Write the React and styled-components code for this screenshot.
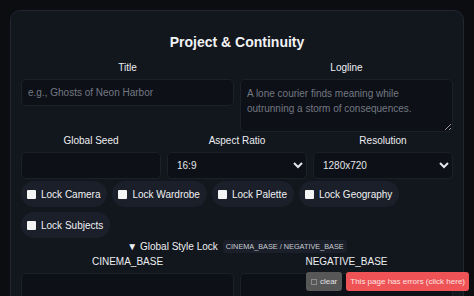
import React from "react";
import styled, { createGlobalStyle } from "styled-components";

const GlobalStyle = createGlobalStyle`
  html, body {
    margin: 0;
    background: #0b0d11;
    color-scheme: dark;
  }
  body {
    padding: 10px;
    font-family: "Liberation Sans", Arial, sans-serif;
    color: #e6e8eb;
  }
`;

const Card = styled.section`
  background: #12161d;
  border: 1px solid #212631;
  border-radius: 10px;
  padding: 10px;
`;

const Heading = styled.h2`
  margin: 12px 0 10px;
  font-size: 14px;
  line-height: 18px;
  font-weight: 700;
  text-align: center;
  color: #f1f3f5;
`;

const Grid = styled.div`
  display: grid;
  grid-template-columns: repeat(${(p) => p.cols}, 1fr);
  column-gap: 6px;
  margin-top: ${(p) => p.top || 2}px;
  align-items: start;
`;

const Field = styled.label`
  display: flex;
  flex-direction: column;
  gap: 5px;
  min-width: 0;
`;

const Label = styled.span`
  font-size: 10px;
  line-height: 13px;
  text-align: center;
  color: #eceef1;
`;

const controlBase = `
  box-sizing: border-box;
  width: 100%;
  background: #0d1016;
  border: 1px solid #1b2029;
  border-radius: 5px;
  color: #d8dbe0;
  font-family: "Liberation Sans", Arial, sans-serif;
  font-size: 10px;
  outline: none;
`;

const Input = styled.input`
  ${controlBase}
  height: 27px;
  padding: 0 6px;
  &::placeholder {
    color: #737984;
  }
`;

const Area = styled.textarea`
  ${controlBase}
  height: 53px;
  padding: 6px 6px;
  line-height: 15px;
  resize: vertical;
  &::placeholder {
    color: #737984;
  }
`;

const Select = styled.select`
  ${controlBase}
  height: 27px;
  padding: 0 5px;
  color: #e4e6ea;
`;

const Chips = styled.div`
  display: flex;
  flex-wrap: wrap;
  gap: 5px;
  margin-top: 2px;
`;

const Chip = styled.label`
  display: inline-flex;
  align-items: center;
  gap: 5px;
  height: 26px;
  padding: 0 7px 0 6px;
  border-radius: 13px;
  background: #1a1f29;
  font-size: 10px;
  color: #f0f1f3;
`;

const Box = styled.input.attrs({ type: "checkbox" })`
  appearance: none;
  margin: 0;
  width: 9px;
  height: 9px;
  border-radius: 1px;
  background: #f4f4f5;
`;

const Details = styled.details`
  margin-top: 2px;
`;

const Summary = styled.summary`
  list-style: none;
  display: flex;
  justify-content: center;
  align-items: center;
  gap: 5px;
  height: 13px;
  font-size: 10px;
  color: #eef0f2;
  &::-webkit-details-marker {
    display: none;
  }
`;

const Badge = styled.span`
  background: #1a1f29;
  border-radius: 3px;
  padding: 2px 3px;
  font-size: 7.3px;
  color: #c9ccd2;
`;

const Overlay = styled.div`
  position: fixed;
  right: 5px;
  bottom: 5px;
  display: flex;
  gap: 4px;
`;

const OverlayButton = styled.button`
  height: 19px;
  border: none;
  border-radius: 3px;
  padding: 0 ${(p) => (p.danger ? 4 : 5)}px;
  font-family: "Liberation Sans", Arial, sans-serif;
  font-size: 8px;
  display: flex;
  align-items: center;
  gap: 3px;
  background: ${(p) => (p.danger ? "#ef5355" : "#575757")};
  color: ${(p) => (p.danger ? "#ffe3e3" : "#e2e2e2")};
`;

const Square = styled.span`
  width: 4px;
  height: 4px;
  border: 1px solid #8a8a8a;
`;

const locks = [
  "Lock Camera",
  "Lock Wardrobe",
  "Lock Palette",
  "Lock Geography",
  "Lock Subjects",
];

export default function App() {
  return (
    <>
      <GlobalStyle />
      <Card>
        <Heading>Project &amp; Continuity</Heading>
        <Grid cols={2} top={10}>
          <Field>
            <Label>Title</Label>
            <Input placeholder="e.g., Ghosts of Neon Harbor" />
          </Field>
          <Field>
            <Label>Logline</Label>
            <Area placeholder="A lone courier finds meaning while outrunning a storm of consequences." />
          </Field>
        </Grid>
        <Grid cols={3}>
          <Field>
            <Label>Global Seed</Label>
            <Input />
          </Field>
          <Field>
            <Label>Aspect Ratio</Label>
            <Select defaultValue="16:9">
              <option>16:9</option>
              <option>4:3</option>
              <option>2.39:1</option>
            </Select>
          </Field>
          <Field>
            <Label>Resolution</Label>
            <Select defaultValue="1280x720">
              <option>1280x720</option>
              <option>1920x1080</option>
            </Select>
          </Field>
        </Grid>
        <Chips>
          {locks.map((l) => (
            <Chip key={l}>
              <Box />
              {l}
            </Chip>
          ))}
        </Chips>
        <Details open>
          <Summary>
            <span>▼ Global Style Lock</span>
            <Badge>CINEMA_BASE / NEGATIVE_BASE</Badge>
          </Summary>
          <Grid cols={2}>
            <Field>
              <Label>CINEMA_BASE</Label>
              <Area />
            </Field>
            <Field>
              <Label>NEGATIVE_BASE</Label>
              <Area />
            </Field>
          </Grid>
        </Details>
      </Card>
      <Overlay>
        <OverlayButton>
          <Square />
          clear
        </OverlayButton>
        <OverlayButton danger>This page has errors (click here)</OverlayButton>
      </Overlay>
    </>
  );
}
